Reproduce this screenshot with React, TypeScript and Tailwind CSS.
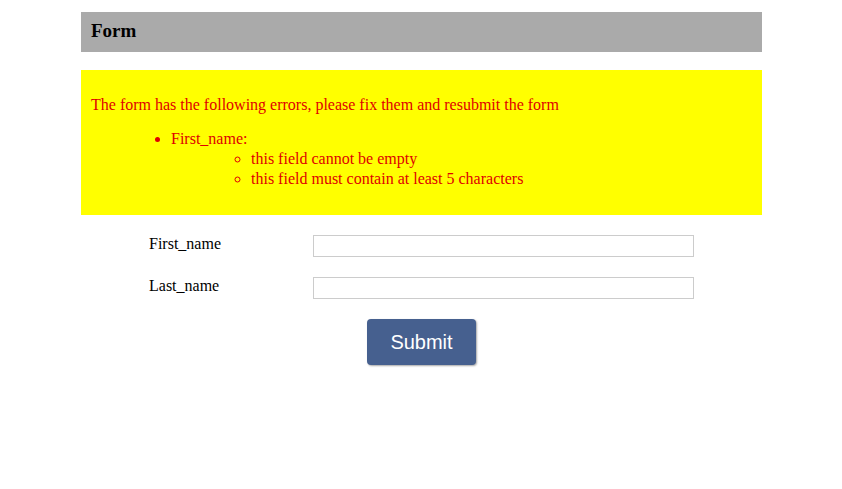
export default function App() {
  return (
    <div className="w-[842px] h-[489px] bg-white" style={{ fontFamily: '"Liberation Serif", "Times New Roman", serif' }}>
      <div className="ml-[81px] w-[681px] pt-[12px]">
        <div className="h-[40px] bg-[#aaaaaa] flex items-center px-[10px] pb-[3px]">
          <h3 className="text-[19px] font-bold text-black leading-none">Form</h3>
        </div>
        <div className="mt-[18px] h-[145px] bg-[#ffff00] px-[10px] pt-[25px] text-[16px] leading-[20px] text-[#e00000]">
          <p>The form has the following errors, please fix them and resubmit the form</p>
          <ul className="list-disc pl-[80px] mt-[14px]">
            <li>
              First_name:
              <ul className="list-[circle] pl-[80px]">
                <li>this field cannot be empty</li>
                <li>this field must contain at least 5 characters</li>
              </ul>
            </li>
          </ul>
        </div>
        <div className="pt-[20px] text-[16px] text-black">
          <div className="flex items-start h-[22px] ml-[68px]">
            <label className="w-[164px] leading-[18px]">First_name</label>
            <input type="text" className="w-[381px] h-[22px] border border-[#cccccc] bg-white" />
          </div>
          <div className="flex items-start h-[22px] ml-[68px] mt-[20px]">
            <label className="w-[164px] leading-[18px]">Last_name</label>
            <input type="text" className="w-[381px] h-[22px] border border-[#cccccc] bg-white" />
          </div>
          <div className="mt-[20px] ml-[286px]">
            <button
              className="w-[109px] h-[46px] rounded-[4px] bg-[#46608f] text-white text-[20px] shadow-[1px_1px_2px_rgba(0,0,0,0.35)]"
              style={{ fontFamily: '"Liberation Sans", Arial, sans-serif' }}
            >
              Submit
            </button>
          </div>
        </div>
      </div>
    </div>
  );
}
